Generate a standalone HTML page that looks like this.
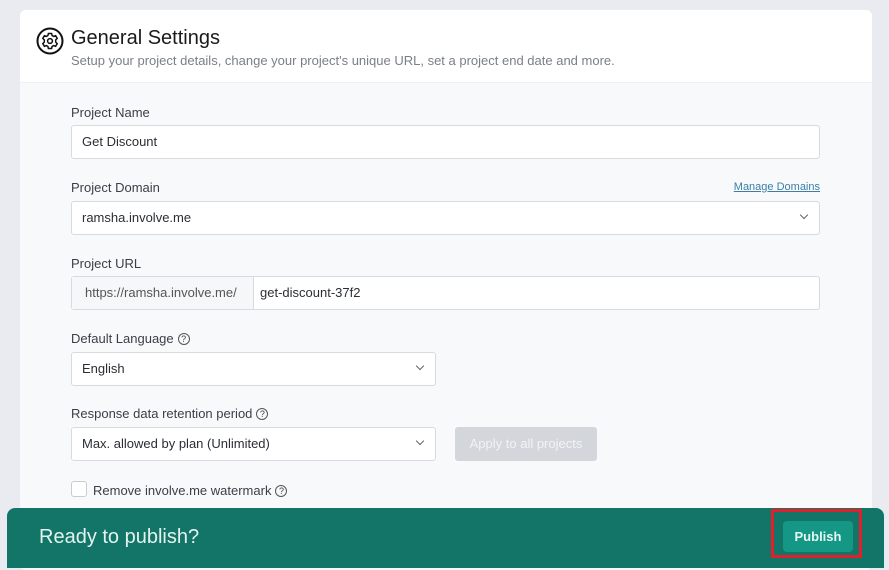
<!DOCTYPE html>
<html><head><meta charset="utf-8"><style>
*{box-sizing:border-box;margin:0;padding:0}
body{width:889px;height:558px;overflow:hidden;background:#e9ebf1;font-family:"Liberation Sans",sans-serif;position:relative;color:#222}
.card{position:absolute;left:20px;top:10px;width:852px;height:560px;background:#f8f9fb;border-radius:6px;overflow:hidden}
.head{height:73px;background:#fff;border-bottom:1px solid #eef0f3;position:relative}
.head h1{position:absolute;left:51px;top:17px;font-size:20px;font-weight:normal;color:#1a1a1a}
.head p{position:absolute;left:51px;top:43px;font-size:13px;color:#7a7f87}
.lbl{position:absolute;left:51px;font-size:13px;color:#3a3f45}
.inp{position:absolute;left:51px;height:34px;background:#fff;border:1px solid #d7dbe0;border-radius:3px;font-size:13px;color:#2a2e33;padding:0 10px;line-height:32px}
.chev{position:absolute;right:12px;top:10px;width:6px;height:6px;border-right:1.2px solid #666;border-bottom:1.2px solid #666;transform:rotate(45deg)}
.q{display:inline-block;width:12px;height:12px;border:1px solid #555;border-radius:50%;font-size:9px;line-height:10px;text-align:center;margin-left:4px;vertical-align:1px}
.bar{position:absolute;left:7px;top:508px;width:877px;height:60px;background:#137468;border-radius:8px 8px 0 0}
</style></head><body>
<div class="card">
 <div class="head">
  <svg style="position:absolute;left:16px;top:17px" width="28" height="28" viewBox="0 0 28 28"><circle cx="14" cy="14" r="12.5" fill="none" stroke="#111" stroke-width="2"/><g fill="none" stroke="#111" stroke-width="1.5"><path d="M12.4 6.5h3.2l.5 2 1.5.9 2-.7 1.6 2.7-1.5 1.5v2.2l1.5 1.5-1.6 2.7-2-.7-1.5.9-.5 2h-3.2l-.5-2-1.5-.9-2 .7-1.6-2.7 1.5-1.5v-2.2l-1.5-1.5 1.6-2.7 2 .7 1.5-.9z"/><circle cx="14" cy="14" r="2.4"/></g></svg>
  <h1>General Settings</h1>
  <p>Setup your project details, change your project's unique URL, set a project end date and more.</p>
 </div>
 <div class="lbl" style="top:95px">Project Name</div>
 <div class="inp" style="top:115px;width:749px">Get Discount</div>
 <div class="lbl" style="top:170px">Project Domain</div>
 <div style="position:absolute;right:52px;top:171px;font-size:11px;color:#3d7ea6;text-decoration:underline">Manage Domains</div>
 <div class="inp" style="top:191px;width:749px">ramsha.involve.me<span class="chev"></span></div>
 <div class="lbl" style="top:246px">Project URL</div>
 <div class="inp" style="top:266px;width:749px;padding:0">
  <span style="display:inline-block;width:182px;height:32px;background:#f6f7f9;border-right:1px solid #d7dbe0;padding-left:13px;color:#555">https://ramsha.involve.me/</span><span style="padding-left:6px">get-discount-37f2</span></div>
 <div class="lbl" style="top:321px">Default Language<span class="q">?</span></div>
 <div class="inp" style="top:342px;width:365px">English<span class="chev"></span></div>
 <div class="lbl" style="top:396px">Response data retention period<span class="q">?</span></div>
 <div class="inp" style="top:417px;width:365px">Max. allowed by plan (Unlimited)<span class="chev"></span></div>
 <div style="position:absolute;left:435px;top:417px;width:142px;height:34px;background:#d3d6db;border-radius:3px;color:#f2f3f5;font-size:13px;line-height:34px;text-align:center">Apply to all projects</div>
 <div style="position:absolute;left:51px;top:471px;width:16px;height:16px;border:1px solid #c9cdd3;border-radius:3px;background:#fff"></div>
 <div class="lbl" style="left:73px;top:473px">Remove involve.me watermark<span class="q">?</span></div>
</div>
<div class="bar">
 <div style="position:absolute;left:32px;top:18px;font-size:20px;color:#e3f4ef">Ready to publish?</div>
 <div style="position:absolute;left:776px;top:13px;width:70px;height:31px;background:#149784;border-radius:4px;color:#e6f7f3;font-size:13px;font-weight:bold;line-height:31px;text-align:center">Publish</div>
</div>
<div style="position:absolute;left:771px;top:509px;width:91px;height:49px;border:3px solid #e0202a"></div>
</body></html>
